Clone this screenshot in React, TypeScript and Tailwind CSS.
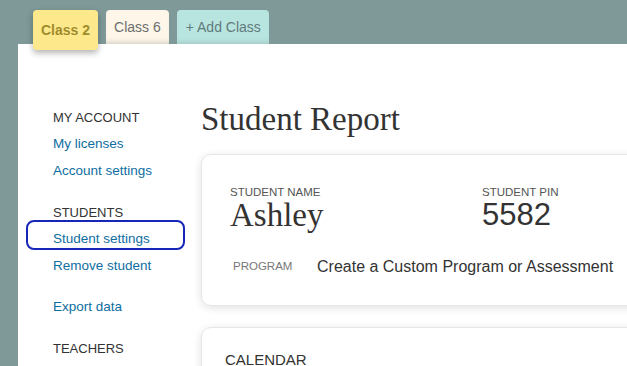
import React from 'react'

const sans = {fontFamily: '"Liberation Sans", Arial, sans-serif'}
const serif = {fontFamily: '"Liberation Serif", "Times New Roman", serif'}

function Tab({label, className}: {label: string; className: string}) {
  return (
    <div
      className={`flex items-center rounded-t-[4px] px-[8px] text-[14px] ${className}`}
    >
      {label}
    </div>
  )
}

function SideHeading({children}: {children: React.ReactNode}) {
  return (
    <div className="h-[27px] flex items-center text-[13px] text-[#333333]">
      {children}
    </div>
  )
}

function SideLink({
  children,
  active,
}: {
  children: React.ReactNode
  active?: boolean
}) {
  return (
    <div className="relative h-[27px] flex items-center text-[13.5px] text-[#0e6e9f]">
      {active && (
        <span className="absolute left-[-27px] top-[-6px] h-[30px] w-[159px] rounded-[8px] border-[2.5px] border-[#1626b8]" />
      )}
      {children}
    </div>
  )
}

export default function App() {
  return (
    <div
      className="h-[366px] w-[627px] overflow-hidden bg-[#7e9998] flex flex-col"
      style={sans}
    >
      <div className="mt-[2px] h-[1px] bg-[#e6eded]" />
      <div className="mt-[8px] h-[34px] flex items-start gap-[8px] pl-[33px]">
        <Tab
          label="Class 2"
          className="relative z-10 h-[40px] bg-[#fde98c] font-bold text-[#a08c2c] rounded-b-[4px] shadow-[0_3px_6px_rgba(0,0,0,0.3)]"
        />
        <Tab
          label="Class 6"
          className="h-[34px] bg-[#fdf6e9] text-[#6e6e6e] shadow-[inset_0_-5px_5px_-3px_rgba(0,0,0,0.15)]"
        />
        <Tab
          label="+ Add Class"
          className="h-[34px] bg-[#b9e5e1] text-[#5f7b7a] pl-[9px] shadow-[inset_0_-5px_5px_-3px_rgba(0,0,0,0.12)]"
        />
      </div>
      <div className="ml-[18px] flex-1 bg-white flex">
        <div className="w-[183px] shrink-0 pl-[35px] pt-[60px] flex flex-col">
          <SideHeading>MY ACCOUNT</SideHeading>
          <SideLink>My licenses</SideLink>
          <SideLink>Account settings</SideLink>
          <div className="h-[14px]" />
          <SideHeading>STUDENTS</SideHeading>
          <SideLink active>Student settings</SideLink>
          <SideLink>Remove student</SideLink>
          <div className="h-[14px]" />
          <SideLink>Export data</SideLink>
          <div className="h-[14px]" />
          <SideHeading>TEACHERS</SideHeading>
        </div>
        <div className="w-[520px] shrink-0 pt-[55px]">
          <h1 className="text-[33px] leading-[40px] text-[#333333]" style={serif}>
            Student Report
          </h1>
          <div className="mt-[15px] h-[152px] rounded-[10px] border border-[#e6e6e6] shadow-[0_2px_8px_rgba(0,0,0,0.12)] pl-[28px] pt-[30px]">
            <div className="flex">
              <div className="w-[252px]">
                <div className="text-[11.5px] leading-[14px] text-[#555555]">
                  STUDENT NAME
                </div>
                <div
                  className="text-[33px] leading-[32px] text-[#333333]"
                  style={serif}
                >
                  Ashley
                </div>
              </div>
              <div>
                <div className="text-[11.5px] leading-[14px] text-[#555555]">
                  STUDENT PIN
                </div>
                <div className="text-[31px] leading-[32px] text-[#333333]">
                  5582
                </div>
              </div>
            </div>
            <div className="mt-[24px] flex items-center pl-[3px]">
              <div className="w-[84px] text-[11.5px] text-[#777777]">
                PROGRAM
              </div>
              <div className="text-[16px] text-[#333333]">
                Create a Custom Program or Assessment
              </div>
            </div>
          </div>
          <div className="mt-[21px] h-[80px] rounded-[10px] border border-[#e6e6e6] shadow-[0_2px_8px_rgba(0,0,0,0.12)] pl-[23px] pt-[21px]">
            <div className="text-[15px] text-[#333333]">CALENDAR</div>
          </div>
        </div>
      </div>
    </div>
  )
}
